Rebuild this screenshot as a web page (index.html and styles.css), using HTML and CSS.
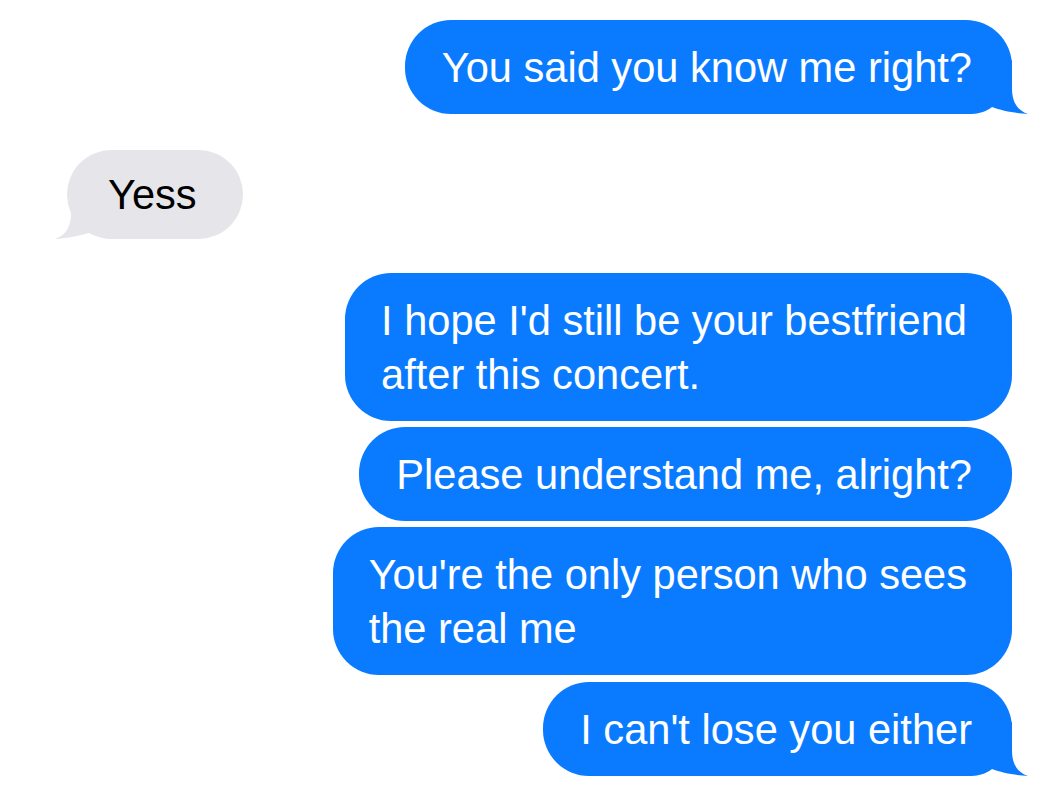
FILE: index.html
```html
<!DOCTYPE html>
<html lang="en">
<head>
<meta charset="utf-8">
<title>Messages</title>
<link rel="stylesheet" href="styles.css">
</head>
<body>
<main class="chat">
  <div class="msg sent tail">You said you know me right?
    <svg class="tail-svg" viewBox="0 0 70 55" width="70" height="55" aria-hidden="true"><path d="M52 0 L52 28 C52 42 57 50 68 54 C58 53.5 42 51 32 47 C27 51 20 54 10 54 L0 54 L0 20 Z"/></svg>
  </div>
  <div class="msg recv tail">Yess
    <svg class="tail-svg" viewBox="0 0 70 55" width="70" height="55" aria-hidden="true"><path d="M52 0 L52 28 C52 42 57 50 68 54 C58 53.5 42 51 32 47 C27 51 20 54 10 54 L0 54 L0 20 Z"/></svg>
  </div>
  <div class="msg sent multi first">I hope I'd still be your bestfriend<br>after this concert.</div>
  <div class="msg sent next">Please understand me, alright?</div>
  <div class="msg sent multi next">You're the only person who sees<br>the real me</div>
  <div class="msg sent tail next last">I can't lose you either
    <svg class="tail-svg" viewBox="0 0 70 55" width="70" height="55" aria-hidden="true"><path d="M52 0 L52 28 C52 42 57 50 68 54 C58 53.5 42 51 32 47 C27 51 20 54 10 54 L0 54 L0 20 Z"/></svg>
  </div>
</main>
</body>
</html>
```

FILE: styles.css
```css
* { box-sizing: border-box; }
html, body {
  margin: 0;
  background: #ffffff;
}
body {
  font-family: "Liberation Sans", Arial, sans-serif;
  font-size: 41.6px;
  line-height: 54px;
  -webkit-font-smoothing: antialiased;
}
.chat {
  display: flex;
  flex-direction: column;
  padding: 20px 39px 0 67px;
}
.msg {
  position: relative;
  z-index: 0;
  padding: 21px 40px 19px 37px;
  border-radius: 46px;
  white-space: nowrap;
}
.sent {
  align-self: flex-end;
  background: #0a7bff;
  color: #ffffff;
}
.recv {
  align-self: flex-start;
  background: #e5e5ea;
  color: #000000;
  margin-top: 36px;
  padding: 18px 46px 17px 41px;
}
.multi {
  padding-right: 45px;
  padding-left: 36px;
}
.first { margin-top: 34px; }
.next { margin-top: 6px; }
.last { margin-top: 7px; }
.tail-svg {
  position: absolute;
  z-index: -1;
  right: -18px;
  bottom: -1px;
  width: 70px;
  height: 55px;
  pointer-events: none;
}
.sent .tail-svg path { fill: #0a7bff; }
.recv .tail-svg {
  right: auto;
  left: -14px;
  transform: scaleX(-1);
}
.recv .tail-svg path { fill: #e5e5ea; }
```
